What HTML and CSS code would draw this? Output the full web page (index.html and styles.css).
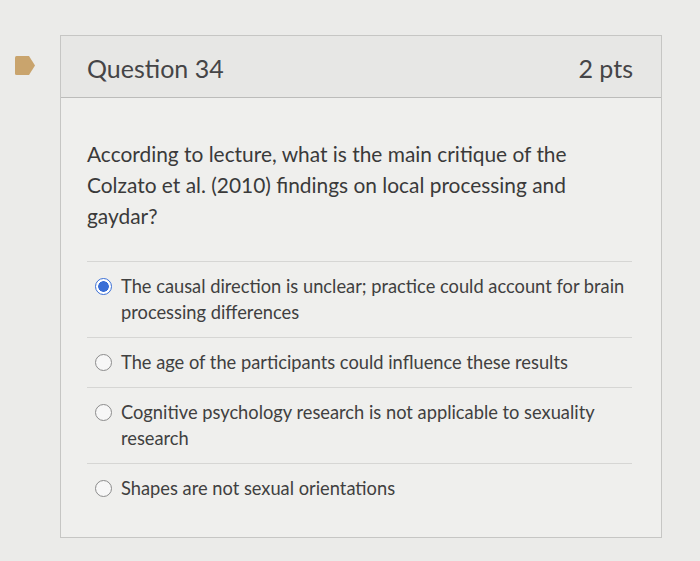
FILE: index.html
```html
<!DOCTYPE html>
<html>
<head>
<meta charset="utf-8">
<link rel="stylesheet" href="styles.css">
</head>
<body>
<div class="page">
  <div class="flag-col">
    <svg class="flag" width="20" height="19" viewBox="0 0 20 19"><path d="M0 1.5 Q0 0 1.5 0 H14 L20 9.5 L14 19 H1.5 Q0 19 0 17.5 Z" fill="#c9a46d"/></svg>
  </div>
  <div class="card">
    <div class="card-header">
      <span class="title">Question 34</span>
      <span class="pts">2 pts</span>
    </div>
    <div class="card-body">
      <p class="question">According to lecture, what is the main critique of the Colzato et al. (2010) findings on local processing and gaydar?</p>
      <div class="answers">
        <div class="answer">
          <span class="radio selected"></span>
          <span class="label">The causal direction is unclear; practice could account for brain processing differences</span>
        </div>
        <div class="answer">
          <span class="radio"></span>
          <span class="label">The age of the participants could influence these results</span>
        </div>
        <div class="answer">
          <span class="radio"></span>
          <span class="label">Cognitive psychology research is not applicable to sexuality research</span>
        </div>
        <div class="answer last">
          <span class="radio"></span>
          <span class="label">Shapes are not sexual orientations</span>
        </div>
      </div>
    </div>
  </div>
</div>
</body>
</html>
```

FILE: styles.css
```css
html, body {
  margin: 0;
  padding: 0;
  background: #ebebe9;
  font-family: Lato, "Open Sans", sans-serif;
  color: #3f3f3f;
}

.page {
  display: flex;
  padding-top: 35px;
  height: 526px;
}

.flag-col {
  width: 60px;
  padding-top: 21px;
  padding-left: 15px;
  box-sizing: border-box;
}

.flag {
  display: block;
}

.card {
  width: 602px;
  height: 503px;
  box-sizing: border-box;
  border: 1px solid #c6c6c4;
  background: #efefed;
}

.card-header {
  height: 62px;
  box-sizing: border-box;
  display: flex;
  align-items: center;
  justify-content: space-between;
  padding: 3px 28px 0 26px;
  background: #e7e7e5;
  border-bottom: 1px solid #bcbcba;
  color: #454547;
  font-size: 25px;
}

.card-body {
  padding: 40px 29px 0 26px;
}

.question {
  margin: 0;
  font-size: 20.9px;
  line-height: 31px;
  width: 530px;
  color: #3a3a3a;
}

.answers {
  margin-top: 30px;
}

.answer {
  display: flex;
  align-items: flex-start;
  border-top: 1px solid #d6d6d4;
  padding: 11px 0 12px 8px;
  font-size: 18.3px;
  line-height: 26px;
  color: #404040;
}

.radio {
  flex: none;
  width: 17px;
  height: 17px;
  box-sizing: border-box;
  border: 1.5px solid #8c8c8c;
  border-radius: 50%;
  background: #f7f7f7;
  margin-top: 5px;
  margin-right: 9px;
}

.radio.selected {
  border: 1.5px solid #3b6fd6;
  background: radial-gradient(circle, #3b6fd6 0, #3b6fd6 5px, #ffffff 5.6px);
}

.label {
  flex: 1;
}
```
